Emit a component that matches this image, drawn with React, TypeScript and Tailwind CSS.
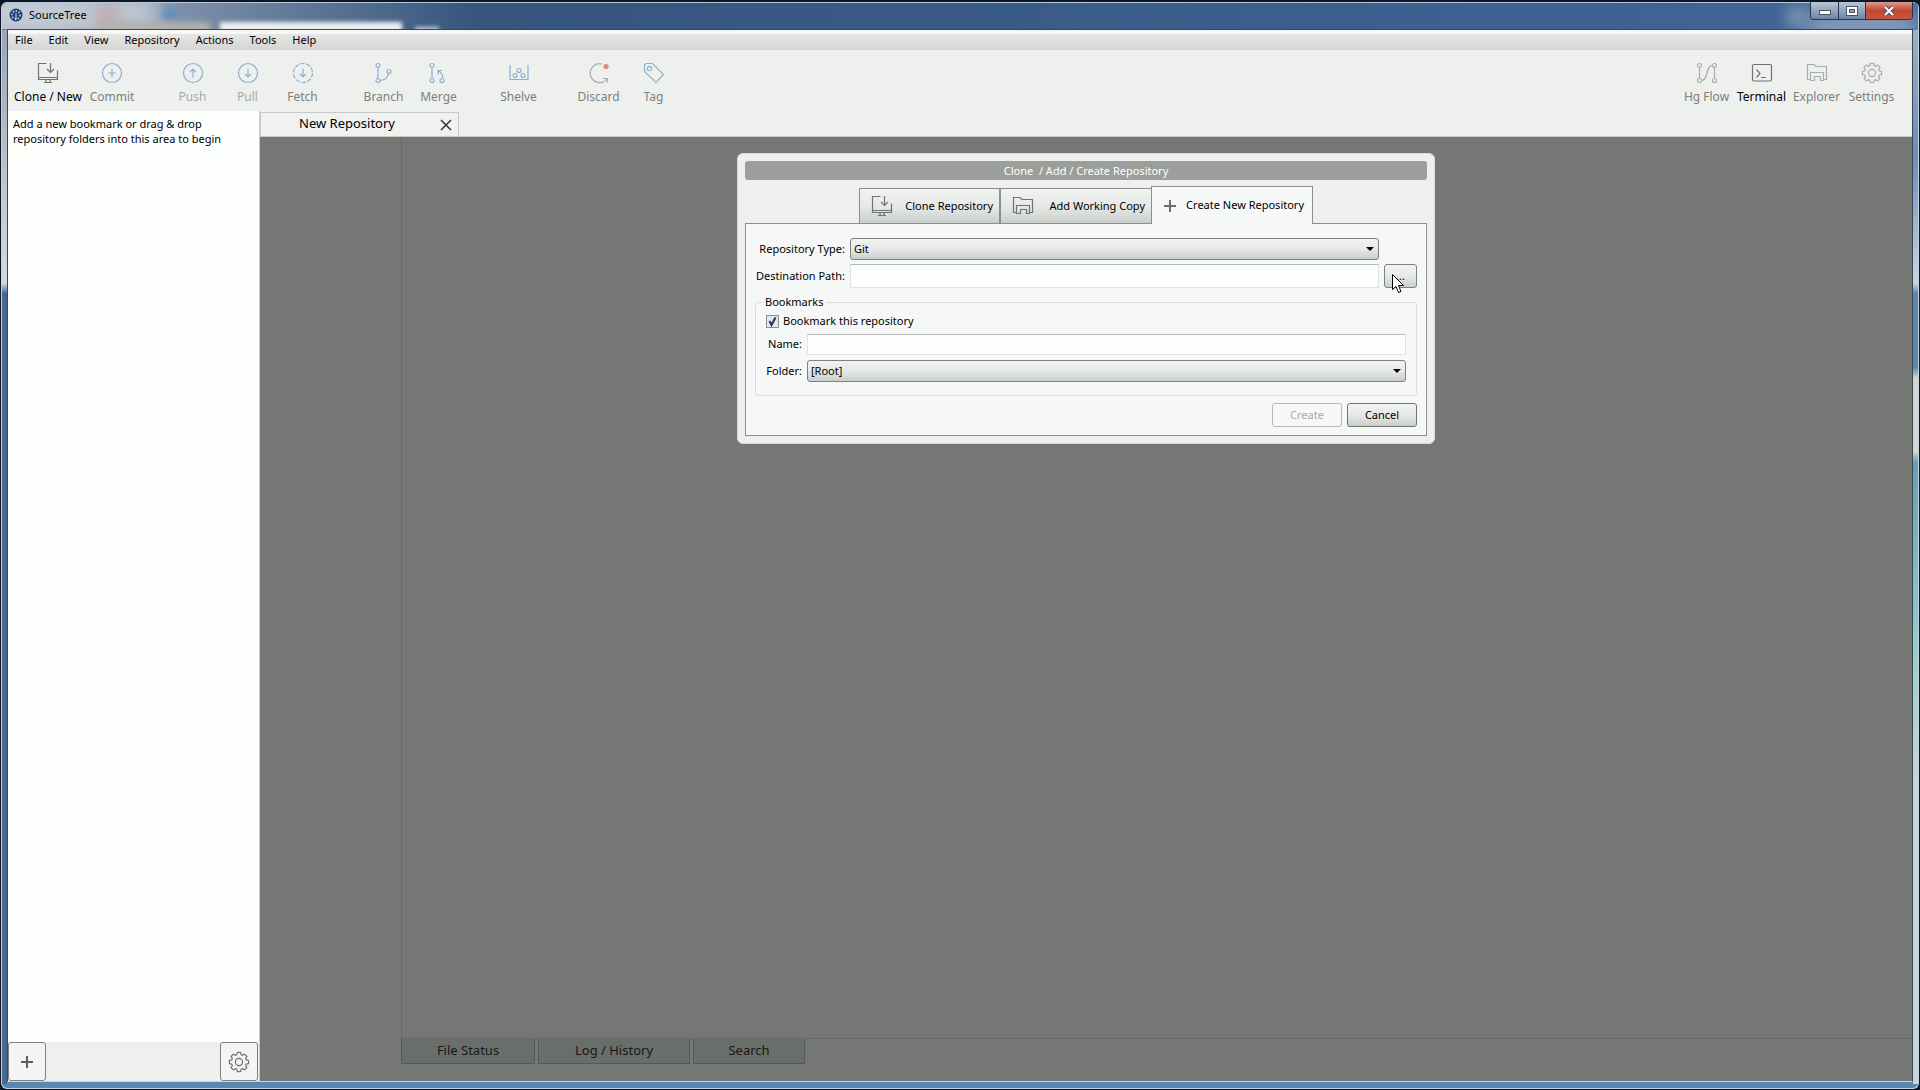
import React, { useState } from "react";

type IconProps = { className?: string };

function Svg({ children, className = "size-6" }: IconProps & { children: React.ReactNode }) {
  return (
    <svg viewBox="0 0 24 24" className={className} fill="none" stroke="currentColor" strokeWidth="1.2" aria-hidden="true">
      {children}
    </svg>
  );
}

const CloneIcon = ({ className }: IconProps) => (
  <Svg className={className}>
    <path d="M10.500 2.500H2.500V18.500H21.500V9.500M2.500 16.500H21.500M10 18.500v2.500M14 18.500v2.500M8 21.500h8" />
    <path d="M14.500 2V11.500M11 8l3.500 3.500L18 8" />
  </Svg>
);
const CommitIcon = () => (
  <Svg>
    <circle cx="12" cy="12" r="9.500" />
    <path d="M12 8v8M8 12h8" />
  </Svg>
);
const PushIcon = () => (
  <Svg>
    <circle cx="12" cy="12" r="9.500" />
    <path d="M12 16.500V8M9 11l3-3 3 3" />
  </Svg>
);
const PullIcon = () => (
  <Svg>
    <circle cx="12" cy="12" r="9.500" />
    <path d="M12 7.500V16M9 13l3 3 3-3" />
  </Svg>
);
const FetchIcon = () => (
  <Svg>
    <circle cx="12" cy="12" r="9.500" strokeDasharray="4.500 1.460" />
    <path d="M12 7.500V16M9 13l3 3 3-3" />
  </Svg>
);
const BranchIcon = () => (
  <Svg>
    <circle cx="6" cy="4.500" r="2" />
    <circle cx="6" cy="19.500" r="2" />
    <circle cx="17" cy="10.500" r="2" />
    <path d="M6 6.500v11M8 19.500C13 19 16 17 16.500 12.500" />
  </Svg>
);
const MergeIcon = () => (
  <Svg>
    <circle cx="5" cy="4.500" r="2" />
    <circle cx="5" cy="19.500" r="2" />
    <circle cx="15" cy="19.500" r="2" />
    <path d="M5 6.500v11M15.500 17.500c.5-3-.5-5.500-4-7.500M11 13.500V9.500h4" />
  </Svg>
);
const ShelveIcon = () => (
  <Svg>
    <path d="M3 4v14.500h18V4" />
    <circle cx="12" cy="9.500" r="2" />
    <circle cx="8" cy="14.500" r="2" />
    <circle cx="16" cy="14.500" r="2" />
  </Svg>
);
const DiscardIcon = () => (
  <Svg>
    <path d="M15 3A9.500 9.500 0 1 0 20.500 17.500M16 17.500H20.500V21.500" className="stroke-[#a9adab]" />
    <circle cx="19" cy="5.500" r="2.600" className="fill-[#dd8a84] stroke-none" />
  </Svg>
);
const TagIcon = () => (
  <Svg>
    <path d="M2.500 4.500a2 2 0 0 1 2-2H10.500L21.500 13.500 14 21.500 2.500 10.500Z" />
    <circle cx="7.500" cy="7.500" r="2.200" />
  </Svg>
);
const FlowIcon = () => (
  <Svg>
    <circle cx="4.500" cy="4.500" r="2" />
    <circle cx="4.500" cy="19.500" r="2" />
    <circle cx="19.500" cy="4.500" r="2" />
    <circle cx="19.500" cy="19.500" r="2" />
    <path d="M4.500 6.500v11M19.500 6.500v11M6.500 19.500C14 19.500 10 4.500 17.500 4.500" />
  </Svg>
);
const TerminalIcon = () => (
  <Svg>
    <rect x="2.500" y="3.500" width="19" height="16.500" rx="1.500" />
    <path d="M6.500 8.500l3.500 4-3.500 4M11 16.500h5" />
  </Svg>
);
const ExplorerIcon = ({ className }: IconProps) => (
  <Svg className={className}>
    <path d="M5.500 18.500H2.500V3.500H9L11 5.500H21.500V18.500H18.500" />
    <path d="M5.500 19.500V11.500H18.500V19.500H15.500V15.500H9.500V19.500Z" />
  </Svg>
);

const toothOutline = Array.from({ length: 8 }, (_, tooth) =>
  [
    [-16, 7.6],
    [-10, 9.7],
    [10, 9.7],
    [16, 7.6],
  ].map(([offset, radius]) => {
    const angle = ((tooth * 45 + offset) * Math.PI) / 180;
    return `${(12 + radius * Math.cos(angle)).toFixed(2)} ${(12 + radius * Math.sin(angle)).toFixed(2)}`;
  }),
).flat();

const GearIcon = ({ className }: IconProps) => (
  <Svg className={className}>
    <path d={`M${toothOutline.join("L")}Z`} strokeLinejoin="round" />
    <circle cx="12" cy="12" r="3.600" />
  </Svg>
);

function Tool({ label, icon, tone = "normal", width = "w-[55px]" }: { label: string; icon: React.ReactNode; tone?: "normal" | "dim" | "active" | "gray"; width?: string }) {
  const iconTone = { normal: "text-[#8fb0d3]", dim: "text-[#8fb0d3]", active: "text-[#6f7371]", gray: "text-[#a9adab]" }[tone];
  const textTone = { normal: "text-[#7b7f7d]", dim: "text-[#a6aaa8]", active: "text-black", gray: "text-[#7b7f7d]" }[tone];
  return (
    <button type="button" className={`flex shrink-0 flex-col items-center whitespace-nowrap pt-[11px] ${width}`}>
      <span className={iconTone}>{icon}</span>
      <span className={`mt-[3px] text-[12px] leading-[18px] ${textTone}`}>{label}</span>
    </button>
  );
}

const face = "bg-linear-to-b from-[#f1f3f1] from-0% via-[#e6e9e7] via-50% to-[#cbcfcc] to-100%";

function Combo({ id, value, options }: { id: string; value: string; options: string[] }) {
  return (
    <div className="relative min-w-0 flex-1">
      <select id={id} defaultValue={value} className={`block h-[22px] w-full appearance-none rounded-[3px] border border-[#7d8280] pl-[3px] text-[11px] leading-[18px] ${face}`}>
        {options.map((o) => (
          <option key={o}>{o}</option>
        ))}
      </select>
      <svg viewBox="0 0 8 4" className="pointer-events-none absolute top-[9px] right-[5px] h-1 w-2" aria-hidden="true">
        <path d="M0 0h8L4 4z" />
      </svg>
    </div>
  );
}

function Dialog() {
  const [bookmark, setBookmark] = useState(true);
  const field = "min-w-0 flex-1 border border-[#dfe4e2] border-t-[#b4b8b6] bg-[#fdfffd] px-1 text-[11px] outline-none";
  return (
    <section role="dialog" aria-label="Clone / Add / Create Repository" className="relative mt-4 w-[698px] shrink-0 rounded-md border border-[#d9dcda] bg-[#eef0ee] p-[7px] text-[11px]">
      <h1 className="h-[19px] whitespace-pre rounded-[3px] bg-[#9b9e9b] text-center leading-[19px] text-white">Clone  / Add / Create Repository</h1>
      <div role="tablist" className="relative -mb-px mt-[6px] flex h-[38px] items-end justify-center">
        <button role="tab" type="button" aria-selected={false} className={`flex h-9 w-[141px] items-center justify-between whitespace-nowrap border border-[#8b8f8d] pl-2.5 pr-1.5 ${face}`}>
          <CloneIcon className="size-6 text-[#6f7371]" />
          Clone Repository
        </button>
        <button role="tab" type="button" aria-selected={false} className={`flex h-9 w-[151px] items-center justify-between whitespace-nowrap border border-r-0 border-[#8b8f8d] pl-2.5 pr-1.5 ${face}`}>
          <ExplorerIcon className="size-6 text-[#6f7371]" />
          Add Working Copy
        </button>
        <button role="tab" type="button" aria-selected={true} className="flex h-[38px] w-[162px] items-center justify-between whitespace-nowrap border border-b-0 border-[#8b8f8d] bg-[#f5f8f6] pl-3 pr-2">
          <svg viewBox="0 0 12 12" className="size-3 stroke-[#6a6e6c] stroke-2" aria-hidden="true">
            <path d="M6 0v12M0 6h12" />
          </svg>
          Create New Repository
        </button>
      </div>
      <div className="border border-[#8b8f8d] bg-[#f5f8f6] px-[9px] pt-[14px] pb-[8px]">
        <div className="flex items-center gap-[5px] pr-[38px]">
          <label htmlFor="type" className="w-[90px] text-right whitespace-nowrap">Repository Type:</label>
          <Combo id="type" value="Git" options={["Git", "Mercurial"]} />
        </div>
        <div className="mt-1 flex h-6 items-center gap-[5px]">
          <label htmlFor="path" className="w-[90px] text-right whitespace-nowrap">Destination Path:</label>
          <input id="path" type="text" className={`h-6 ${field}`} />
          <button type="button" aria-label="Browse" className={`h-6 w-[33px] rounded-[3px] border border-[#7d8280] ${face}`}>...</button>
        </div>
        <fieldset className="mt-[5px] h-[103px] rounded-[3px] border border-[#d9dedb] px-[10px]">
          <legend className="-ml-1 px-[3px] leading-[18px]">Bookmarks</legend>
          <label className="flex h-5 items-center gap-1">
            <span className="relative size-[13px]">
              <input type="checkbox" checked={bookmark} onChange={(e) => setBookmark(e.target.checked)} className="block size-[13px] appearance-none border border-[#8b8f8d] bg-[#e3e6ec]" />
              {bookmark && (
                <svg viewBox="0 0 13 13" className="pointer-events-none absolute inset-0 size-[13px] fill-none stroke-[#2b2a6e] stroke-2" aria-hidden="true">
                  <path d="M3.500 6l2 4L9.500 2.500" />
                </svg>
              )}
            </span>
            Bookmark this repository
          </label>
          <div className="mt-[3px] flex items-center gap-[5px]">
            <label htmlFor="name" className="w-9 text-right">Name:</label>
            <input id="name" type="text" className={`h-[21px] ${field}`} />
          </div>
          <div className="mt-[5px] flex items-center gap-[5px]">
            <label htmlFor="folder" className="w-9 text-right">Folder:</label>
            <Combo id="folder" value="[Root]" options={["[Root]"]} />
          </div>
        </fieldset>
        <div className="mt-[7px] flex justify-end gap-[5px]">
          <button type="button" disabled className="h-6 w-[70px] rounded-[3px] border border-[#b4b8b6] text-[#a6aaa8]">Create</button>
          <button type="button" className={`h-6 w-[70px] rounded-[3px] border border-[#6f7371] ${face}`}>Cancel</button>
        </div>
      </div>
    </section>
  );
}

function TitleBar() {
  return (
    <header className="relative flex h-[27px] shrink-0 items-start justify-between">
      <div className="absolute inset-y-0 -right-[5px] -left-[5px] overflow-hidden rounded-t-md bg-linear-to-r from-[#a9b4c1] from-0% via-[#35557d] via-25% to-[#42669a]">
        <div className="absolute -top-2 -left-4 h-10 w-44 rounded-full bg-[#cfd6dd] opacity-80 blur-md" />
        <div className="absolute top-1 left-24 size-5 rotate-45 bg-[#c08c90] opacity-60 blur-sm" />
        <div className="absolute top-1 left-40 h-4 w-4 rounded-full bg-[#5f8ac4] opacity-80 blur-[3px]" />
        <div className="absolute top-5 left-24 h-3 w-28 bg-[#b3b2ac] blur-[3px]" />
        <div className="absolute top-[20px] left-[218px] h-4 w-[182px] bg-[#eceff0] blur-[2px]" />
        <div className="absolute top-[25px] left-[413px] h-2 w-6 bg-[#c5ced8] blur-[2px]" />
        <div className="absolute top-1 right-28 size-5 rounded-full bg-[#aab6c4] opacity-70 blur-sm" />
        <div className="absolute top-3 right-0 h-6 w-28 bg-[#b4c0cf] opacity-80 blur-md" />
        <div className="absolute inset-x-0 top-0 h-px bg-[#b9c9d9]" />
      </div>
      <div className="relative flex items-center gap-1.5 pt-1 pl-0.5">
        <svg viewBox="0 0 14 14" className="size-[14px]" aria-hidden="true">
          <circle cx="7" cy="7" r="6.500" className="fill-[#1f3a78]" />
          <circle cx="7" cy="7" r="4" strokeDasharray="1.500 1.500" className="fill-none stroke-[#b5c3e0] stroke-2" />
          <path d="M7 5v7" className="stroke-[#dbe3f2]" />
        </svg>
        <span className="text-[11px] leading-[18px]">SourceTree</span>
      </div>
      <div className="relative flex h-[18px] overflow-hidden rounded-b-[4px] border border-t-0 border-[#27364c]">
        <button type="button" aria-label="Minimize" className="flex w-7 items-center justify-center border-r border-[#27364c] bg-linear-to-b from-[#b9c6d6] to-[#6d86a6]">
          <span className="mt-1 h-[5px] w-3 border border-[#4b5563] bg-white" />
        </button>
        <button type="button" aria-label="Maximize" className="flex w-[27px] items-center justify-center border-r border-[#27364c] bg-linear-to-b from-[#b9c6d6] to-[#6d86a6]">
          <span className="flex h-[10px] w-3 items-center justify-center border border-[#4b5563] bg-white">
            <span className="h-1 w-[6px] border border-[#4b5563] bg-[#8ea2bb]" />
          </span>
        </button>
        <button type="button" aria-label="Close" className="flex w-[46px] items-center justify-center bg-linear-to-b from-[#d99b8e] via-[#c2452f] to-[#c9573f]">
          <svg viewBox="0 0 12 10" className="h-[10px] w-3" aria-hidden="true">
            <path d="M2 1l8 8M10 1L2 9" className="stroke-[#4b5563] stroke-4" />
            <path d="M2 1l8 8M10 1L2 9" className="stroke-white stroke-2" />
          </svg>
        </button>
      </div>
    </header>
  );
}

export default function App() {
  return (
    <div className="flex h-screen flex-col overflow-hidden bg-[#0b1726] px-px pt-0.5 pb-px font-['Noto_Sans',sans-serif] text-black">
      <div className="relative flex min-h-0 flex-1 flex-col rounded-md border border-t-0 border-[#c3d3e0] bg-[#5a88b3] px-[5px] pb-[6px]">
        <div className="absolute top-7 bottom-1 left-0 w-[5px] bg-linear-to-b from-[#9aa7b6] from-0% via-[#d5dadf] via-24% to-[#47678f] to-25%" />
        <div className="absolute top-7 right-0 bottom-1 w-[5px] bg-[linear-gradient(to_bottom,#9fb0c6_0%,#6d8cb8_12%,#c9d6e0_24%,#5d86ae_25%,#5d86ae_32%,#d5d6d0_33%,#d5d6d0_40%,#6a9db5_41%,#9ad0cb_60%,#c9d6d2_72%,#c5d8d4_100%)]" />
        <TitleBar />
        <div className="relative flex min-h-0 flex-1 flex-col border border-[#3a4650] border-b-[#c9d6cf] bg-[#eef0ee]">
          <nav className="flex h-5 shrink-0 items-center gap-4 border-t-4 border-[#f6f8f6] bg-linear-to-b from-[#e6e6e4] to-[#d6d5d3] pb-[3px] pl-[7px] text-[11px]">
            {["File", "Edit", "View", "Repository", "Actions", "Tools", "Help"].map((m) => (
              <button key={m} type="button">{m}</button>
            ))}
          </nav>
          <div className="flex h-[61px] shrink-0 items-start">
            <Tool label="Clone / New" icon={<CloneIcon />} tone="active" width="w-20" />
            <Tool label="Commit" icon={<CommitIcon />} width="w-12" />
            <div className="ml-[29px] flex">
              <Tool label="Push" icon={<PushIcon />} tone="dim" />
              <Tool label="Pull" icon={<PullIcon />} tone="dim" />
              <Tool label="Fetch" icon={<FetchIcon />} />
            </div>
            <div className="ml-[26px] flex">
              <Tool label="Branch" icon={<BranchIcon />} />
              <Tool label="Merge" icon={<MergeIcon />} />
            </div>
            <div className="ml-[25px] flex">
              <Tool label="Shelve" icon={<ShelveIcon />} />
            </div>
            <div className="ml-[25px] flex">
              <Tool label="Discard" icon={<DiscardIcon />} />
              <Tool label="Tag" icon={<TagIcon />} />
            </div>
            <div className="mr-[13px] ml-auto flex">
              <Tool label="Hg Flow" icon={<FlowIcon />} tone="gray" />
              <Tool label="Terminal" icon={<TerminalIcon />} tone="active" />
              <Tool label="Explorer" icon={<ExplorerIcon />} tone="gray" />
              <Tool label="Settings" icon={<GearIcon />} tone="gray" />
            </div>
          </div>
          <div className="flex min-h-0 flex-1">
            <aside className="flex w-[251px] shrink-0 flex-col bg-[#fdfffd]">
              <p className="flex-1 pt-[5px] pl-[5px] text-[11px] leading-[15px]">
                Add a new bookmark or drag &amp; drop
                <br />
                repository folders into this area to begin
              </p>
              <div className="flex h-[39px] justify-between bg-[#eef0ee] pr-px">
                <button type="button" aria-label="Add bookmark" className="flex w-[38px] items-center justify-center rounded-[3px] border border-[#7d8280] bg-[#f3f4f3]">
                  <svg viewBox="0 0 12 12" className="size-3 stroke-[#5a5e5c] stroke-2" aria-hidden="true">
                    <path d="M6 0v12M0 6h12" />
                  </svg>
                </button>
                <button type="button" aria-label="Bookmark settings" className="flex w-[38px] items-center justify-center rounded-[3px] border border-[#7d8280] bg-[#f3f4f3] text-[#6f7371]">
                  <GearIcon />
                </button>
              </div>
            </aside>
            <main className="flex min-w-0 flex-1 flex-col border-l border-[#c9cccb]">
              <div className="flex h-[26px] shrink-0 items-end border-b border-[#c5c9c7]">
                <div className="flex h-6 w-[199px] items-center border border-b-0 border-[#c5c9c7] bg-[#f0f2f0] pr-[6px] pl-[38px]">
                  <span className="flex-1 pb-0.5 text-[13px]">New Repository</span>
                  <button type="button" aria-label="Close tab">
                    <svg viewBox="0 0 12 12" className="size-3 stroke-[#333] stroke-[1.5]" aria-hidden="true">
                      <path d="M1 1l10 10M11 1L1 11" />
                    </svg>
                  </button>
                </div>
              </div>
              <div className="relative flex min-h-0 flex-1 bg-[#747773]">
                <div className="w-[141px] shrink-0" />
                <div className="flex min-w-0 flex-1 flex-col pb-[17px]">
                  <div className="flex-1 border-b border-l border-[#656965]" />
                  <div className="flex h-[25px] gap-[3px] text-[13px] text-[#161816]">
                    <button type="button" className="w-[134px] border border-t-0 border-[#555955] bg-[#6a6e6a]">File Status</button>
                    <button type="button" className="w-[152px] border border-t-0 border-[#555955] bg-[#6a6e6a]">Log / History</button>
                    <button type="button" className="w-[112px] border border-t-0 border-[#555955] bg-[#6a6e6a]">Search</button>
                  </div>
                </div>
                <div className="absolute inset-0 flex items-start justify-center">
                  <Dialog />
                </div>
              </div>
            </main>
          </div>
        </div>
      </div>
      <svg viewBox="0 0 13 20" className="pointer-events-none absolute top-[274px] left-[1392px] h-5 w-[13px]" aria-hidden="true">
        <path d="M.5.500V15.500L4 12.500 6.500 18.500 9 17.500 6.500 11.500H11.500Z" className="fill-white stroke-black" />
      </svg>
    </div>
  );
}
